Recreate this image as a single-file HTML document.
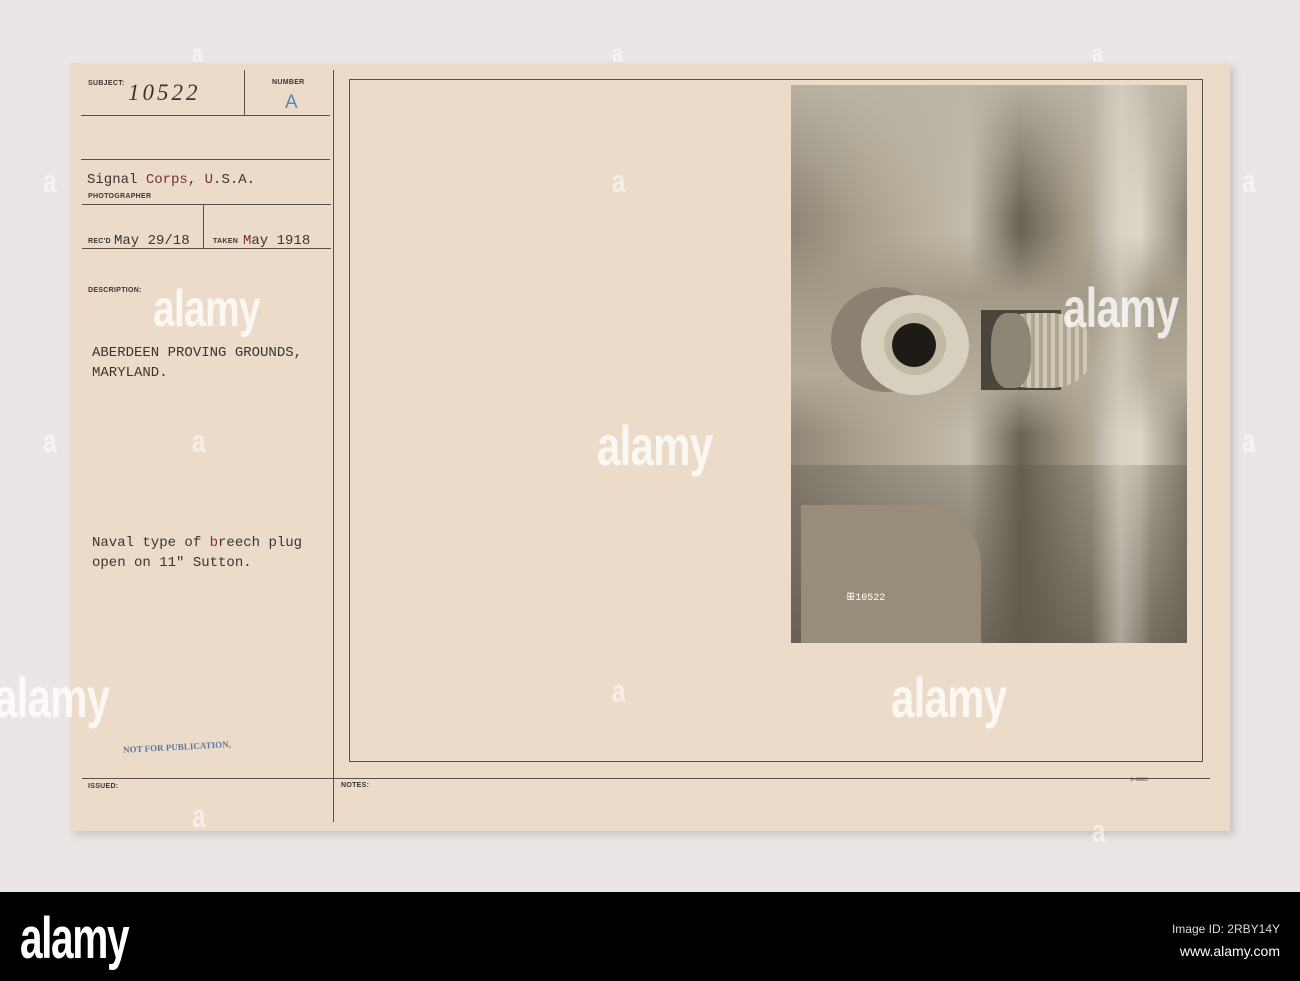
<!DOCTYPE html>
<html><head><meta charset="utf-8"><style>
*{margin:0;padding:0;box-sizing:border-box}
body{width:1300px;height:981px;overflow:hidden;background:#ebe6e5;position:relative;font-family:"Liberation Mono",monospace}
.a{position:absolute}
#card{left:70px;top:63px;width:1160px;height:768px;background:#ecdbc9;box-shadow:4px 4px 8px rgba(0,0,0,.15)}
.ln{position:absolute;background:#5a5048}
.t{position:absolute;font-size:14px;color:#3a3530;white-space:nowrap;line-height:1}
.lb{position:absolute;font-family:"Liberation Sans",sans-serif;font-weight:bold;font-size:7px;color:#3a3530;letter-spacing:.3px}
.wm{position:absolute;font-family:"Liberation Sans",sans-serif;font-weight:bold;color:rgba(255,255,255,.78);transform:scaleX(.75);transform-origin:left top;letter-spacing:-1px;line-height:1}
.sm{color:rgba(255,255,255,.55)}
#bar{left:0;top:892px;width:1300px;height:89px;background:#000}
</style></head><body>
<div id="card" class="a"></div>
<div class="ln" style="left:333px;top:70px;width:1px;height:752px"></div>
<div class="ln" style="left:244px;top:70px;width:1px;height:45px"></div>
<div class="ln" style="left:81px;top:115px;width:249px;height:1px"></div>
<div class="ln" style="left:81px;top:159px;width:249px;height:1px"></div>
<div class="ln" style="left:82px;top:204px;width:249px;height:1px"></div>
<div class="ln" style="left:203px;top:205px;width:1px;height:43px"></div>
<div class="ln" style="left:82px;top:248px;width:249px;height:1px"></div>
<div class="ln" style="left:82px;top:778px;width:1128px;height:1px"></div>
<div class="a" style="left:349px;top:79px;width:854px;height:683px;border:1px solid #5a5048"></div>
<div class="lb" style="left:88px;top:80px">SUBJECT:</div>
<div class="a" style="left:128px;top:80px;font-family:'Liberation Serif',serif;font-style:italic;font-size:23px;color:#3a3530;letter-spacing:3px">10522</div>
<div class="lb" style="left:272px;top:79px">NUMBER</div>
<div class="a" style="left:285px;top:92px;font-family:'Liberation Sans',sans-serif;font-size:19px;color:#5a86b0">A</div>
<div class="t" style="left:87px;top:173px">Signal <span style="color:#7a3030">Corps</span>, <span style="color:#7a3030">U</span>.S.A.</div>
<div class="lb" style="left:88px;top:193px">PHOTOGRAPHER</div>
<div class="lb" style="left:88px;top:238px">REC'D</div><div class="t" style="left:114px;top:234px">May 29/18</div>
<div class="lb" style="left:213px;top:238px">TAKEN</div><div class="t" style="left:243px;top:234px"><span style="color:#7a3030">M</span>ay 1918</div>
<div class="lb" style="left:88px;top:287px">DESCRIPTION:</div>
<div class="t" style="left:92px;top:346px">ABERDEEN PROVING GROUNDS,</div>
<div class="t" style="left:92px;top:366px">MARYLAND.</div>
<div class="t" style="left:92px;top:536px">Naval type of <span style="color:#8a3030">b</span>reech plug</div>
<div class="t" style="left:92px;top:556px">open on 11" Sutton.</div>
<div class="a" style="left:123px;top:742px;font-family:'Liberation Serif',serif;font-weight:bold;font-size:9px;color:#5c7a9c;transform:rotate(-3deg)">NOT FOR PUBLICATION,</div>
<div class="lb" style="left:88px;top:783px">ISSUED:</div>
<div class="lb" style="left:341px;top:782px">NOTES:</div>
<div class="a" style="left:1130px;top:777px;font-size:5px;color:#3a3530">3—9005</div>
<!-- photo -->
<div class="a" style="left:791px;top:85px;width:396px;height:558px;overflow:hidden;background:linear-gradient(90deg,#8f8675 0%,#aca490 20%,#c4bcaa 45%,#6a6354 58%,#a49b88 72%,#dcd5c6 88%,#8d8576 100%)">
 <div class="a" style="left:0;top:0;width:396px;height:130px;background:linear-gradient(180deg,rgba(190,182,165,.9),rgba(170,160,140,0))"></div>
 <div class="a" style="left:0;top:150px;width:396px;height:200px;background:linear-gradient(180deg,rgba(120,112,98,0),#a39a87 30%,#b3ab98 70%,rgba(120,112,98,0))"></div>
 <div class="a" style="left:0;top:380px;width:396px;height:178px;background:linear-gradient(180deg,rgba(90,84,72,.3),rgba(95,88,75,.8))"></div>
 <div class="a" style="left:300px;top:0;width:60px;height:558px;background:linear-gradient(90deg,rgba(230,225,215,0),rgba(230,225,215,.5),rgba(230,225,215,0))"></div>
 <div class="a" style="left:10px;top:420px;width:180px;height:140px;border-radius:0 60px 0 0;background:#978d7a"></div>
 <div class="a" style="left:40px;top:202px;width:110px;height:105px;border-radius:50%;background:#8a8170"></div>
 <div class="a" style="left:70px;top:210px;width:108px;height:100px;border-radius:50%;background:#d8d0bf"></div>
 <div class="a" style="left:93px;top:228px;width:62px;height:62px;border-radius:50%;background:#c2b9a5"></div>
 <div class="a" style="left:101px;top:238px;width:44px;height:44px;border-radius:50%;background:#1e1a16"></div>
 <div class="a" style="left:190px;top:225px;width:80px;height:80px;background:#4a443a"></div>
 <div class="a" style="left:200px;top:228px;width:100px;height:75px;border-radius:40%;background:repeating-linear-gradient(90deg,#b0a792 0 4px,#cfc8b6 4px 8px)"></div>
 <div class="a" style="left:200px;top:228px;width:40px;height:75px;border-radius:40%;background:#8e8674"></div>
 <div class="a" style="left:55px;top:507px;font-size:10px;color:#fff">ꕥ10522</div>
</div>
<div class="wm" style="left:153px;top:283px;font-size:52px">alamy</div>
<div class="wm" style="left:597px;top:418px;font-size:56px">alamy</div>
<div class="wm" style="left:1063px;top:280px;font-size:56px">alamy</div>
<div class="wm" style="left:891px;top:670px;font-size:56px">alamy</div>
<div class="wm" style="left:-6px;top:670px;font-size:56px">alamy</div>
<div class="wm sm" style="left:43px;top:165px;font-size:32px">a</div>
<div class="wm sm" style="left:1242px;top:165px;font-size:32px">a</div>
<div class="wm sm" style="left:612px;top:165px;font-size:32px">a</div>
<div class="wm sm" style="left:43px;top:425px;font-size:32px">a</div>
<div class="wm sm" style="left:1242px;top:425px;font-size:32px">a</div>
<div class="wm sm" style="left:192px;top:425px;font-size:32px">a</div>
<div class="wm sm" style="left:192px;top:800px;font-size:32px">a</div>
<div class="wm sm" style="left:612px;top:675px;font-size:32px">a</div>
<div class="wm sm" style="left:1092px;top:815px;font-size:32px">a</div>
<div class="wm sm" style="left:192px;top:40px;font-size:26px">a</div>
<div class="wm sm" style="left:612px;top:40px;font-size:26px">a</div>
<div class="wm sm" style="left:1092px;top:40px;font-size:26px">a</div>
<div id="bar" class="a"></div>
<div class="a" style="left:20px;top:910px;font-family:'Liberation Sans',sans-serif;font-weight:bold;font-size:58px;color:#fff;transform:scaleX(.7);transform-origin:left top;letter-spacing:-2px;line-height:1">alamy</div>
<div class="a" style="left:1130px;top:922px;width:150px;text-align:right;font-family:'Liberation Sans',sans-serif;font-size:12px;color:#ddd">Image ID: 2RBY14Y</div>
<div class="a" style="left:1130px;top:943px;width:150px;text-align:right;font-family:'Liberation Sans',sans-serif;font-size:14px;color:#fff">www.alamy.com</div>
</body></html>
